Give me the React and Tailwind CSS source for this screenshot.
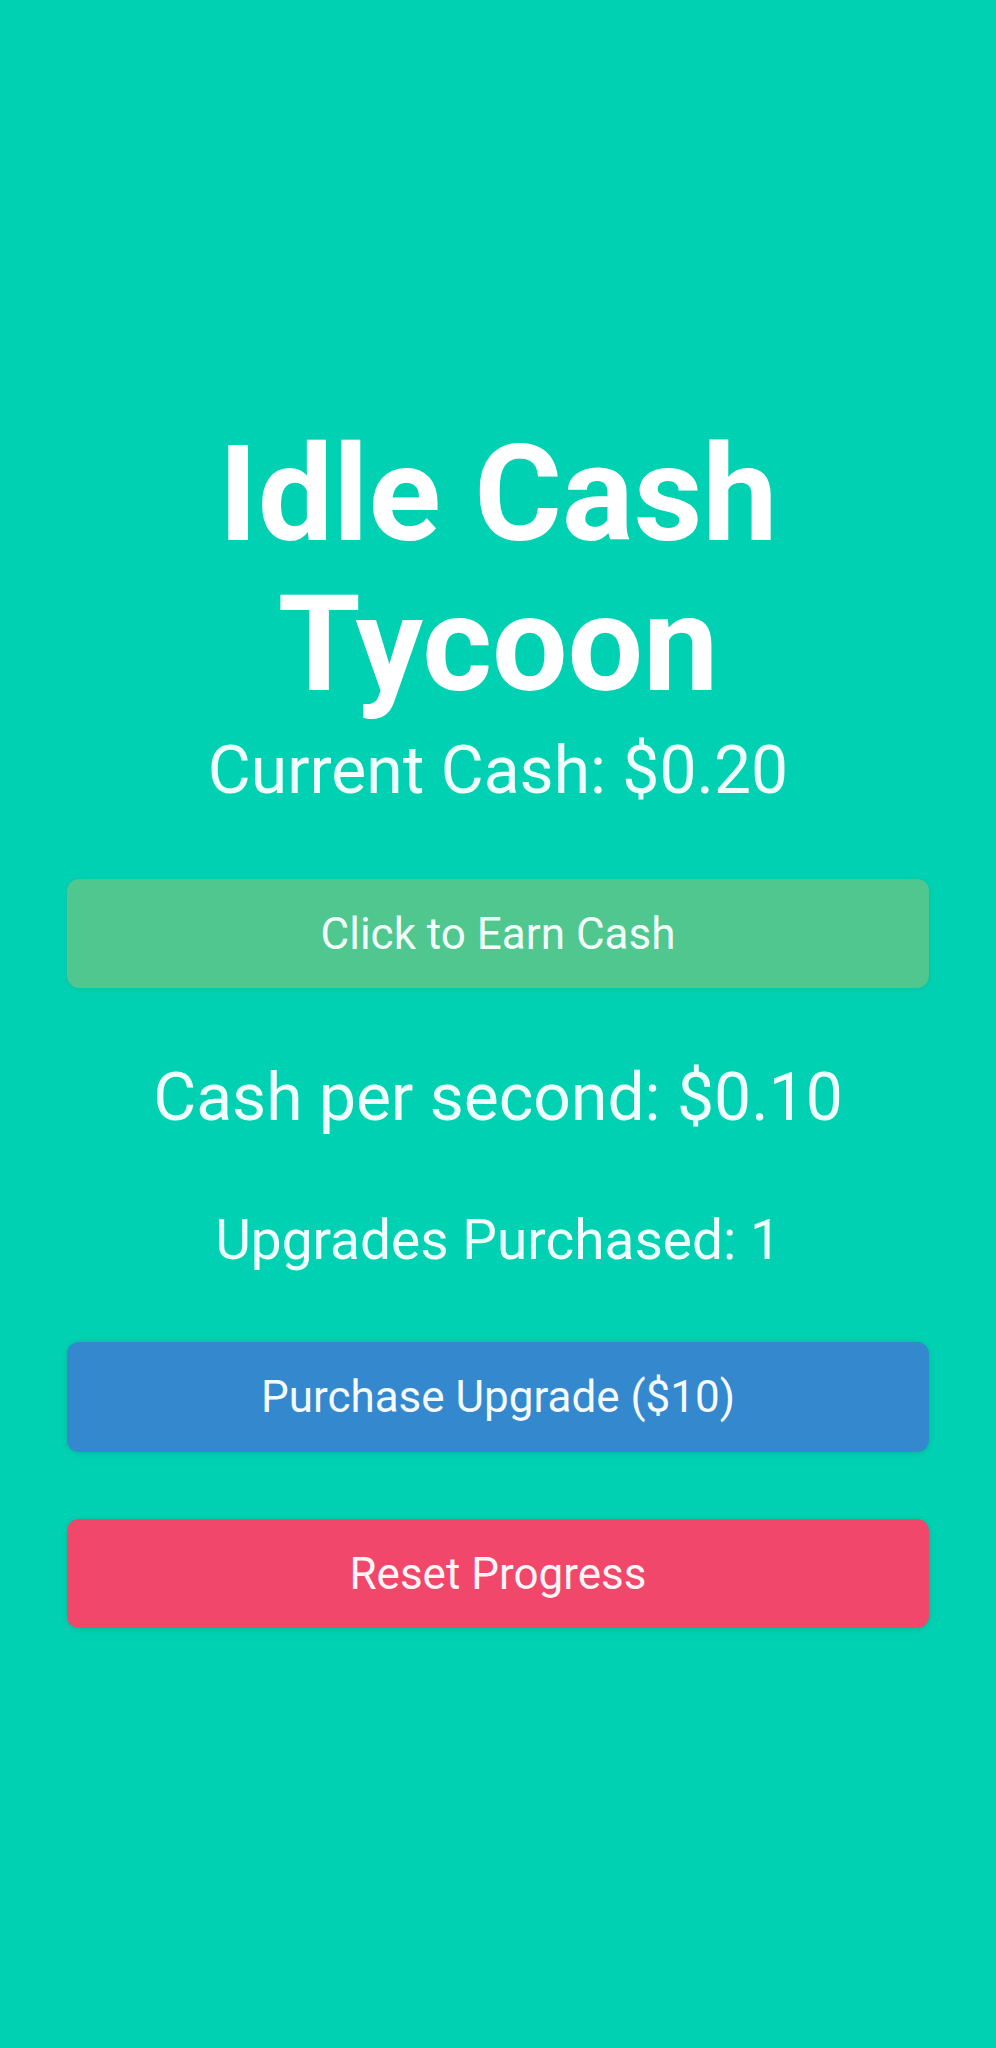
import React, { useEffect, useState } from "react";

const UPGRADE_COST = 10;

export default function App() {
  const [cash, setCash] = useState(0.2);
  const [perSecond, setPerSecond] = useState(0.1);
  const [upgrades, setUpgrades] = useState(1);

  useEffect(() => {
    const id = setInterval(() => setCash((c) => c), 1000);
    return () => clearInterval(id);
  }, []);

  const earn = () => setCash((c) => c + 0.1);
  const buy = () => {
    if (cash >= UPGRADE_COST) {
      setCash((c) => c - UPGRADE_COST);
      setPerSecond((p) => p + 0.1);
      setUpgrades((u) => u + 1);
    }
  };
  const reset = () => {
    setCash(0);
    setPerSecond(0.1);
    setUpgrades(1);
  };

  return (
    <div
      className="min-h-[2048px] w-full bg-[#00d1b2] flex flex-col items-center pt-[420px] px-[67px]"
      style={{ fontFamily: "Roboto, 'Noto Sans', sans-serif" }}
    >
      <h1 className="text-[134px] leading-[150px] font-bold text-white text-center w-[620px]">
        Idle Cash Tycoon
      </h1>

      <p className="mt-[1px] text-[66px] leading-[99px] text-[#effffb] text-center">
        Current Cash: ${cash.toFixed(2)}
      </p>

      <button
        onClick={earn}
        className="mt-[59px] w-full h-[109px] rounded-[12px] bg-[#4fc78f] text-[#f2fff9] text-[44px] flex items-center justify-center shadow-[0_1px_5px_rgba(0,0,0,0.08)]"
      >
        Click to Earn Cash
      </button>

      <p className="mt-[60px] text-[66px] leading-[99px] text-[#effffb] text-center">
        Cash per second: ${perSecond.toFixed(2)}
      </p>

      <p className="mt-[52px] text-[55px] leading-[82px] text-[#effffb] text-center">
        Upgrades Purchased: {upgrades}
      </p>

      <button
        onClick={buy}
        className="mt-[61px] w-full h-[110px] rounded-[12px] bg-[#3488ce] text-[#f4faff] text-[44px] flex items-center justify-center shadow-[0_1px_6px_rgba(0,0,0,0.12)]"
      >
        Purchase Upgrade (${UPGRADE_COST})
      </button>

      <button
        onClick={reset}
        className="mt-[67px] w-full h-[109px] rounded-[12px] bg-[#f0476a] text-[#fff5f7] text-[44px] flex items-center justify-center shadow-[0_1px_6px_rgba(0,0,0,0.12)]"
      >
        Reset Progress
      </button>
    </div>
  );
}
